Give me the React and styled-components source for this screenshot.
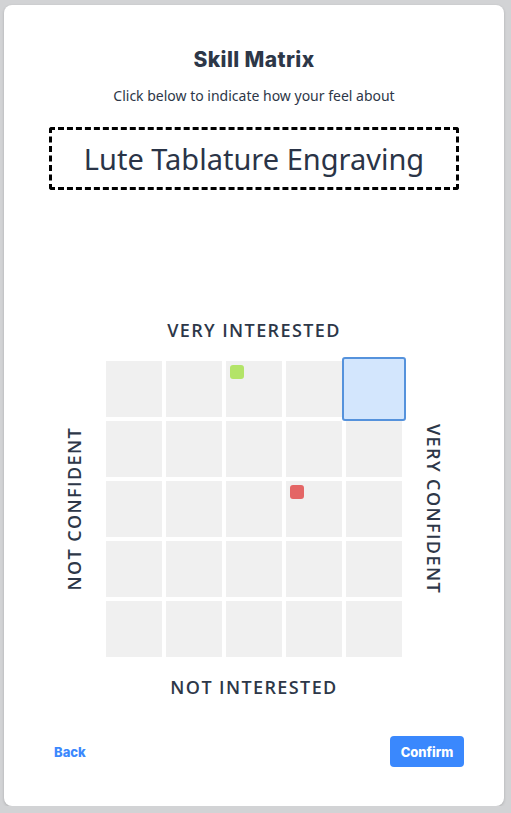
import React from "react";
import styled, { createGlobalStyle } from "styled-components";

const GlobalStyle = createGlobalStyle`
  body {
    margin: 0;
    background: #d2d3d5;
    font-family: "Noto Sans", "Open Sans", sans-serif;
  }
`;

const markers = {
  "0-2": "#b3e468",
  "2-3": "#e46666",
};
const selected = "0-4";

export default function App() {
  const rows = [0, 1, 2, 3, 4];
  return (
    <>
      <GlobalStyle />
      <Card>
        <Title>Skill Matrix</Title>
        <Subtitle>Click below to indicate how your feel about</Subtitle>
        <SkillBox>Lute Tablature Engraving</SkillBox>

        <AxisLabel $top>VERY INTERESTED</AxisLabel>
        <MatrixRow>
          <SideLabel $flip>NOT CONFIDENT</SideLabel>
          <Grid>
            {rows.map((r) =>
              rows.map((c) => {
                const key = `${r}-${c}`;
                return (
                  <Cell key={key} $selected={key === selected}>
                    {markers[key] && <Marker $color={markers[key]} />}
                  </Cell>
                );
              })
            )}
          </Grid>
          <SideLabel>VERY CONFIDENT</SideLabel>
        </MatrixRow>
        <AxisLabel>NOT INTERESTED</AxisLabel>

        <Footer>
          <BackButton>Back</BackButton>
          <ConfirmButton>Confirm</ConfirmButton>
        </Footer>
      </Card>
    </>
  );
}

const Card = styled.div`
  box-sizing: border-box;
  width: 500px;
  height: 801px;
  margin: 5px 0 0 4px;
  padding-top: 43px;
  background: #fff;
  border-radius: 8px;
  box-shadow: 0 1px 3px rgba(0, 0, 0, 0.18);
  display: flex;
  flex-direction: column;
  align-items: center;
  color: #2d3748;
`;

const Title = styled.h1`
  margin: 0;
  font-family: "Inter", sans-serif;
  font-size: 21px;
  line-height: 24px;
  font-weight: 800;
  letter-spacing: 0.4px;
`;

const Subtitle = styled.p`
  margin: 14px 0 0;
  font-size: 14px;
  line-height: 20px;
`;

const SkillBox = styled.div`
  box-sizing: border-box;
  margin-top: 21px;
  width: 410px;
  height: 63px;
  border: 3px dashed #000;
  border-radius: 3px;
  display: flex;
  align-items: center;
  justify-content: center;
  font-size: 29px;
  color: #2a3447;
`;

const AxisLabel = styled.div`
  margin-top: ${(p) => (p.$top ? "129px" : "19px")};
  margin-bottom: ${(p) => (p.$top ? "20px" : "0")};
  font-family: "Open Sans", sans-serif;
  font-size: 18px;
  line-height: 22px;
  font-weight: 600;
  letter-spacing: 1.4px;
`;

const MatrixRow = styled.div`
  display: flex;
  align-items: center;
  gap: 21px;
`;

const SideLabel = styled.div`
  writing-mode: vertical-rl;
  transform: ${(p) => (p.$flip ? "rotate(180deg)" : "none")};
  font-family: "Open Sans", sans-serif;
  font-size: 18px;
  line-height: 22px;
  font-weight: 600;
  letter-spacing: 1.4px;
`;

const Grid = styled.div`
  display: grid;
  grid-template-columns: repeat(5, 56px);
  grid-auto-rows: 56px;
  gap: 4px;
`;

const Cell = styled.div`
  position: relative;
  box-sizing: border-box;
  background: ${(p) => (p.$selected ? "#d3e6fd" : "#f0f0f0")};
  border: ${(p) => (p.$selected ? "2.5px solid #5592dc" : "none")};
  border-radius: ${(p) => (p.$selected ? "3px" : "0")};
  margin: ${(p) => (p.$selected ? "-4px" : "0")};
  z-index: ${(p) => (p.$selected ? 1 : 0)};
`;

const Marker = styled.span`
  position: absolute;
  top: 4px;
  left: 4px;
  width: 14px;
  height: 14px;
  border-radius: 3px;
  background: ${(p) => p.$color};
`;

const Footer = styled.div`
  box-sizing: border-box;
  width: 100%;
  margin-top: 38px;
  padding: 0 40px;
  display: flex;
  justify-content: space-between;
  align-items: center;
`;

const BaseButton = styled.button`
  font-family: "Inter", sans-serif;
  font-size: 13px;
  font-weight: 800;
  border: none;
  cursor: pointer;
  height: 31px;
  border-radius: 4px;
`;

const BackButton = styled(BaseButton)`
  background: none;
  color: #3b88fd;
  padding: 0 10px;
`;

const ConfirmButton = styled(BaseButton)`
  background: #3a88fd;
  color: #fff;
  width: 74px;
  padding: 0;
`;
